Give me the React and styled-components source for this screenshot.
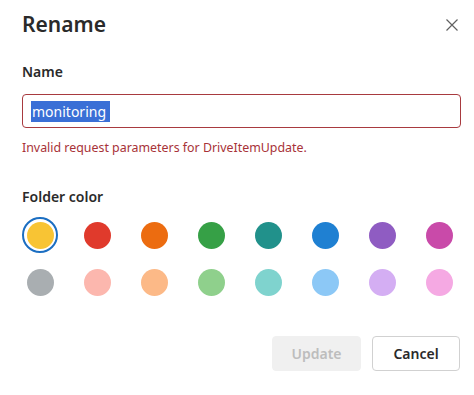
import styled, { createGlobalStyle } from "styled-components";

const GlobalStyle = createGlobalStyle`
  html, body {
    margin: 0;
    padding: 0;
    background: #ffffff;
  }
  body {
    font-family: "Noto Sans", "Open Sans", sans-serif;
    color: #242424;
  }
`;

const Dialog = styled.div`
  width: 474px;
  height: 395px;
  box-sizing: border-box;
  padding: 10px 13px 0 22px;
  display: flex;
  flex-direction: column;
  background: #ffffff;
`;

const Header = styled.div`
  display: flex;
  justify-content: space-between;
  align-items: flex-start;
`;

const Title = styled.h1`
  margin: 0;
  font-size: 21px;
  line-height: 28px;
  font-weight: 600;
  color: #2a2a2a;
`;

const CloseButton = styled.button`
  margin: 9px 3px 0 0;
  padding: 0;
  border: 0;
  background: none;
  width: 12px;
  height: 12px;
  display: flex;
  cursor: pointer;
`;

const Label = styled.div`
  margin-top: ${(p) => p.$top}px;
  font-size: 14px;
  line-height: 20px;
  font-weight: 600;
  color: #2a2a2a;
`;

const InputBox = styled.div`
  margin-top: 12px;
  height: 34px;
  box-sizing: border-box;
  border: 1.5px solid #a83a3f;
  border-radius: 4px;
  display: flex;
  align-items: center;
  padding-left: 8px;
`;

const Selected = styled.span`
  background: #3a6fd6;
  color: #ffffff;
  font-size: 14px;
  line-height: 21px;
  padding: 0 4px 0 1px;
`;

const ErrorText = styled.div`
  margin-top: 12px;
  font-size: 12.4px;
  line-height: 16px;
  color: #a83238;
`;

const ColorGrid = styled.div`
  margin-top: 10px;
  display: grid;
  grid-template-columns: repeat(8, 36px);
  column-gap: 21px;
  row-gap: 11px;
`;

const Swatch = styled.button`
  width: 36px;
  height: 36px;
  padding: 0;
  box-sizing: border-box;
  border-radius: 50%;
  border: 2px solid ${(p) => (p.$selected ? "#1b6ec2" : "transparent")};
  background: #ffffff;
  display: grid;
  place-items: center;
  cursor: pointer;
`;

const Dot = styled.span`
  width: 27px;
  height: 27px;
  border-radius: 50%;
  background: ${(p) => p.$color};
`;

const Footer = styled.div`
  margin-top: 36px;
  display: flex;
  justify-content: flex-end;
  gap: 11px;
  padding-right: 1px;
`;

const Button = styled.button`
  width: ${(p) => p.$width}px;
  height: 35px;
  box-sizing: border-box;
  border-radius: 4px;
  font-family: "Noto Sans", "Open Sans", sans-serif;
  font-size: 14px;
  font-weight: 600;
  border: 1px solid ${(p) => (p.$disabled ? "#f0f0f0" : "#d1d1d1")};
  background: ${(p) => (p.$disabled ? "#f0f0f0" : "#ffffff")};
  color: ${(p) => (p.$disabled ? "#bdbdbd" : "#2a2a2a")};
`;

const colors = [
  "#f8c434", "#e03a2c", "#ec6c10", "#36a046", "#21918b", "#1f80d2", "#8f5cc2", "#c94aa9",
  "#a9aeb1", "#fcb7ae", "#fcb987", "#8fd08c", "#7fd3ce", "#8cc8f6", "#d4aef3", "#f5a9e3",
];

const App = () => {
  return (
    <>
      <GlobalStyle />
      <Dialog>
        <Header>
          <Title>Rename</Title>
          <CloseButton aria-label="Close">
            <svg width="12" height="12" viewBox="0 0 12 12">
              <path d="M0.5 0.5 L11.5 11.5 M11.5 0.5 L0.5 11.5" stroke="#616161" strokeWidth="1.2" />
            </svg>
          </CloseButton>
        </Header>

        <Label $top={24}>Name</Label>
        <InputBox>
          <Selected>monitoring</Selected>
        </InputBox>
        <ErrorText>Invalid request parameters for DriveItemUpdate.</ErrorText>

        <Label $top={31}>Folder color</Label>
        <ColorGrid>
          {colors.map((c, i) => (
            <Swatch key={c} $selected={i === 0}>
              <Dot $color={c} />
            </Swatch>
          ))}
        </ColorGrid>

        <Footer>
          <Button $width={89} $disabled>Update</Button>
          <Button $width={88}>Cancel</Button>
        </Footer>
      </Dialog>
    </>
  );
};

export default App;
